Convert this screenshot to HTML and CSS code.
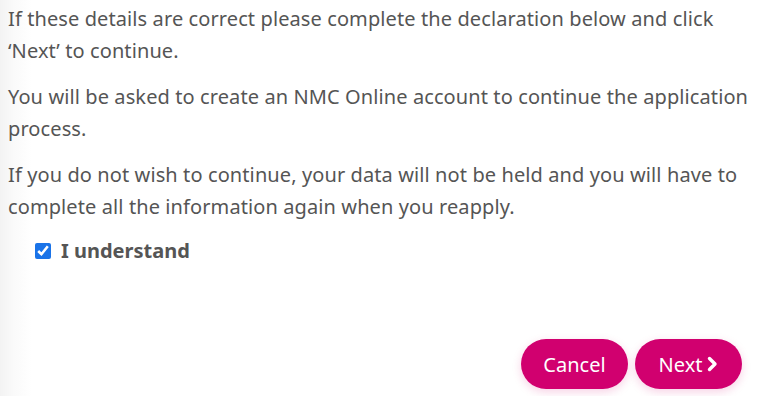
FILE: index.html
```html
<!DOCTYPE html>
<html lang="en">

<head>
  <meta charset="UTF-8">
  <meta name="viewport" content="width=device-width, initial-scale=1.0">
  <title>Declaration</title>
  <link rel="stylesheet" href="styles.css">
</head>

<body>
  <div class="panel">
    <p>If these details are correct please complete the declaration below and click &lsquo;Next&rsquo; to continue.</p>
    <p>You will be asked to create an NMC Online account to continue the application process.</p>
    <p>If you do not wish to continue, your data will not be held and you will have to complete all the information again when you reapply.</p>

    <label class="declaration">
      <input type="checkbox" checked>
      <span>I understand</span>
    </label>

    <div class="actions">
      <button class="btn">Cancel</button>
      <button class="btn">Next
        <svg class="chevron" viewBox="0 0 12 16" width="12" height="16">
          <path d="M3.5 2.5 L9 8 L3.5 13.5" fill="none" stroke="#fff" stroke-width="3.4" stroke-linecap="round" stroke-linejoin="round"/>
        </svg>
      </button>
    </div>
  </div>
</body>

</html>
```

FILE: styles.css
```css
html, body {
  margin: 0;
  height: 100%;
  background: #fff;
}

.panel {
  box-sizing: border-box;
  min-height: 100%;
  padding: 3px 10px 0 8px;
  font-family: "Noto Sans", sans-serif;
  font-size: 20px;
  letter-spacing: 0.1px;
  color: #555;
  background: linear-gradient(to right, #f3f3f3 0, #fafafa 14px, #fff 32px);
}

.panel p {
  margin: 0 0 14px;
  line-height: 32px;
}

.declaration {
  display: flex;
  align-items: center;
  gap: 10px;
  margin: 14px 0 0 27px;
  font-weight: bold;
  letter-spacing: 0;
  color: #555;
}

.declaration input {
  width: 16px;
  height: 16px;
  margin: 0;
  accent-color: #1a73e8;
}

.actions {
  display: flex;
  justify-content: flex-end;
  gap: 7px;
  margin: 75px 16px 0 0;
}

.btn {
  display: flex;
  align-items: center;
  justify-content: center;
  gap: 4px;
  width: 107px;
  height: 50px;
  border: none;
  border-radius: 25px;
  background: #d1006f;
  color: #fff;
  font-family: "Noto Sans", sans-serif;
  font-size: 20px;
  letter-spacing: 0;
  box-shadow: 0 3px 10px rgba(209, 0, 111, 0.18);
}
```
